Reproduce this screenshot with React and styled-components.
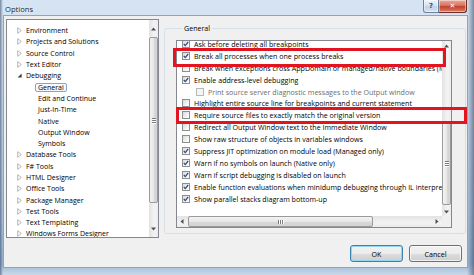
import React from 'react';
import styled, { createGlobalStyle } from 'styled-components';

const FONT = `"Open Sans", "Segoe UI", "Noto Sans", sans-serif`;

const Global = createGlobalStyle`
  html, body { margin: 0; padding: 0; background: #ffffff; }
  body { width: 474px; height: 275px; overflow: hidden; }
  * { box-sizing: border-box; }
`;

const Window = styled.div`
  position: relative;
  width: 474px;
  height: 275px;
  display: flex;
  flex-direction: column;
  padding: 0 6px 7px 3px;
  font-family: ${FONT};
  background:
    linear-gradient(90deg, rgba(40,60,90,0.55) 0px, rgba(40,60,90,0) 3px, rgba(40,60,90,0) 467px, rgba(30,45,70,0.5) 474px),
    linear-gradient(180deg, #d6e4f3 0%, #c7d9ed 40%, #b2c9e2 75%, #9db8d6 96%, #c9d9ea 100%);
`;

const TitleBar = styled.div`
  height: 15px;
  flex: none;
  display: flex;
  align-items: flex-start;
  justify-content: space-between;
`;

const Title = styled.div`
  padding: 4px 0 0 2px;
  font-size: 7.6px;
  line-height: 10px;
  color: #151f2c;
  text-shadow: 0 0 3px rgba(255, 255, 255, 0.9);
`;

const CaptionButtons = styled.div`
  display: flex;
  margin-right: 1px;
`;

const CaptionButton = styled.div`
  width: ${p => (p.$close ? 28 : 16)}px;
  height: 13px;
  display: flex;
  align-items: center;
  justify-content: center;
  border: 1px solid ${p => (p.$close ? '#6e2a22' : '#6f8299')};
  border-top: none;
  border-left: ${p => (p.$close ? 'none' : undefined)};
  border-radius: ${p => (p.$close ? '0 0 3px 0' : '0 0 0 3px')};
  background: ${p =>
    p.$close
      ? 'linear-gradient(180deg, #e9a99a 0%, #d7745f 45%, #c4412b 55%, #d4816a 100%)'
      : 'linear-gradient(180deg, #eef4fa 0%, #d6e3f1 45%, #bfd1e6 55%, #d5e3f2 100%)'};
  box-shadow: inset 0 0 0 1px rgba(255, 255, 255, 0.45);
  font-family: "DejaVu Sans", sans-serif;
  font-size: 7px;
  font-weight: bold;
  color: ${p => (p.$close ? '#ffffff' : '#3d4f66')};
`;

const Client = styled.div`
  flex: 1;
  display: flex;
  flex-direction: column;
  background: #f0f0f0;
  border: 1px solid #8ea3bc;
  padding: 3px 0 5px 2px;
`;

const MainRow = styled.div`
  height: 219px;
  flex: none;
  display: flex;
  align-items: flex-start;
  gap: 5px;
`;

const TreeBox = styled.div`
  width: 153px;
  height: 219px;
  flex: none;
  display: flex;
  background: #ffffff;
  border: 1px solid #828790;
`;

const TreeList = styled.div`
  flex: 1;
  overflow: hidden;
  padding-top: 5px;
`;

const TreeRow = styled.div`
  height: 11.3px;
  display: flex;
  align-items: center;
  padding-left: ${p => (p.$level ? 28 : 10)}px;
  white-space: nowrap;
`;

const Expander = styled.svg`
  width: 5px;
  height: 7px;
  margin-right: 4px;
  flex: none;
`;

const TreeLabel = styled.span`
  font-size: 7px;
  line-height: 7px;
  color: #000000;
  padding: 0 2px;
  border: 1px solid ${p => (p.$selected ? '#7fa7d8' : 'transparent')};
  border-radius: 2px;
  background: ${p => (p.$selected ? 'linear-gradient(180deg, #fbfdff, #eef5fd)' : 'transparent')};
  margin-left: ${p => (p.$level ? 0 : -3)}px;
`;

const VScroll = styled.div`
  width: 9px;
  flex: none;
  display: flex;
  flex-direction: column;
  background: linear-gradient(90deg, #e3e3e3, #f3f3f3 60%, #ececec);
`;

const HScroll = styled.div`
  height: 11px;
  display: flex;
  align-items: stretch;
  background: linear-gradient(180deg, #e3e3e3, #f3f3f3 60%, #ececec);
`;

const ArrowBtn = styled.div`
  flex: none;
  ${p => (p.$horizontal ? `width: ${p.$size}px;` : `height: ${p.$size}px;`)}
  display: flex;
  align-items: center;
  justify-content: center;
`;

const Thumb = styled.div`
  flex: none;
  ${p =>
    p.$horizontal
      ? `margin-left: ${p.$offset}px; width: ${p.$length}px; flex-direction: row;
         background: linear-gradient(180deg, #f4f4f4, #e7e7e7 50%, #d9d9d9 51%, #d3d3d3);`
      : `margin-top: ${p.$offset}px; height: ${p.$length}px; flex-direction: column;
         background: linear-gradient(90deg, #f4f4f4, #e7e7e7 50%, #d9d9d9 51%, #d3d3d3);`}
  border: 1px solid #9a9a9a;
  border-radius: 2px;
  display: flex;
  align-items: center;
  justify-content: center;
  gap: 1px;
`;

const Grip = styled.div`
  ${p => (p.$horizontal ? 'width: 1px; height: 4px;' : 'width: 4px; height: 1px;')}
  background: #7c7c7c;
  box-shadow: ${p => (p.$horizontal ? '1px 0 0 #ffffff' : '0 1px 0 #ffffff')};
`;

const Spacer = styled.div`
  flex: 1;
`;

const Group = styled.fieldset`
  flex: 1;
  min-width: 0;
  margin: 4px 1px 0 0;
  padding: 0 13px 5px 11px;
  border: 1px solid #d5dfe5;
  border-radius: 3px;
`;

const Legend = styled.legend`
  margin-left: 6px;
  padding: 0 2px;
  font-size: 7.1px;
  line-height: 10px;
  color: #000000;
`;

const ListBox = styled.div`
  margin-top: 7px;
  width: 276px;
  height: 188px;
  border: 1px solid #828790;
  background: #ffffff;
  display: grid;
  grid-template-columns: 1fr 9px;
  grid-template-rows: 1fr 11px;
`;

const ListContent = styled.div`
  overflow: hidden;
`;

const ListInner = styled.div`
  margin-top: -3px;
`;

const OptionRow = styled.div`
  height: 11.9px;
  display: flex;
  align-items: center;
  padding-left: ${p => (p.$indent ? 19 : 5)}px;
  white-space: nowrap;
`;

const CheckBox = styled.span`
  width: 8px;
  height: 8px;
  flex: none;
  margin-right: 4px;
  border: 1px solid ${p => (p.$disabled ? '#b8b8b8' : '#8e8f8f')};
  background: ${p =>
    p.$disabled ? '#f4f4f4' : 'linear-gradient(135deg, #d9d9d9 0%, #f3f3f3 60%, #ffffff 100%)'};
  display: flex;
  align-items: center;
  justify-content: center;
`;

const OptionText = styled.span`
  font-size: 7.1px;
  line-height: 10px;
  color: ${p => (p.$disabled ? '#6d6d6d' : '#000000')};
`;

const Corner = styled.div`
  background: #f0f0f0;
`;

const ButtonRow = styled.div`
  margin-top: 7px;
  display: flex;
  justify-content: flex-end;
  gap: 6px;
  padding-right: 5px;
`;

const Button = styled.div`
  width: 53px;
  height: 17px;
  display: flex;
  align-items: center;
  justify-content: center;
  font-size: 7.1px;
  color: #000000;
  border: 1px solid ${p => (p.$primary ? '#3c7fb1' : '#707070')};
  border-radius: 3px;
  background: linear-gradient(180deg, #f2f2f2 0%, #ebebeb 50%, #dddddd 51%, #cfcfcf 100%);
  box-shadow: inset 0 0 0 1px ${p => (p.$primary ? '#93d6f4' : 'rgba(255,255,255,0.7)')};
`;

const Highlight = styled.div`
  position: absolute;
  left: ${p => p.$x}px;
  top: ${p => p.$y}px;
  width: ${p => p.$w}px;
  height: ${p => p.$h}px;
  border: 3px solid #e2141f;
  pointer-events: none;
`;

const Arrow = ({ dir }) => {
  const paths = {
    up: 'M0 3.5 L2.5 0.5 L5 3.5 Z',
    down: 'M0 0.5 L2.5 3.5 L5 0.5 Z',
    left: 'M3.5 0 L0.5 2.5 L3.5 5 Z',
    right: 'M0.5 0 L3.5 2.5 L0.5 5 Z',
  };
  const horiz = dir === 'left' || dir === 'right';
  return (
    <svg width={horiz ? 4 : 5} height={horiz ? 5 : 4} viewBox={horiz ? '0 0 4 5' : '0 0 5 4'}>
      <path d={paths[dir]} fill="#505050" />
    </svg>
  );
};

const Check = () => (
  <svg width="6" height="6" viewBox="0 0 6 6">
    <path d="M0.8 3 L2.3 4.6 L5.2 1" fill="none" stroke="#2c4a85" strokeWidth="1.2" />
  </svg>
);

const treeItems = [
  { label: 'Environment' },
  { label: 'Projects and Solutions' },
  { label: 'Source Control' },
  { label: 'Text Editor' },
  { label: 'Debugging', expanded: true },
  { label: 'General', level: 1, selected: true },
  { label: 'Edit and Continue', level: 1 },
  { label: 'Just-In-Time', level: 1 },
  { label: 'Native', level: 1 },
  { label: 'Output Window', level: 1 },
  { label: 'Symbols', level: 1 },
  { label: 'Database Tools' },
  { label: 'F# Tools' },
  { label: 'HTML Designer' },
  { label: 'Office Tools' },
  { label: 'Package Manager' },
  { label: 'Test Tools' },
  { label: 'Text Templating' },
  { label: 'Windows Forms Designer' },
];

const options = [
  { label: 'Ask before deleting all breakpoints', checked: true },
  { label: 'Break all processes when one process breaks', checked: true },
  { label: 'Break when exceptions cross AppDomain or managed/native boundaries (Managed only)' },
  { label: 'Enable address-level debugging', checked: true },
  { label: 'Print source server diagnostic messages to the Output window', indent: true, disabled: true },
  { label: 'Highlight entire source line for breakpoints and current statement' },
  { label: 'Require source files to exactly match the original version' },
  { label: 'Redirect all Output Window text to the Immediate Window' },
  { label: 'Show raw structure of objects in variables windows' },
  { label: 'Suppress JIT optimization on module load (Managed only)', checked: true },
  { label: 'Warn if no symbols on launch (Native only)', checked: true },
  { label: 'Warn if script debugging is disabled on launch', checked: true },
  { label: 'Enable function evaluations when minidump debugging through IL interpreter', checked: true },
  { label: 'Show parallel stacks diagram bottom-up', checked: true },
];

const Expand = ({ expanded }) =>
  expanded ? (
    <Expander viewBox="0 0 5 7">
      <path d="M4.6 1.6 L4.6 5.6 L0.6 5.6 Z" fill="#3c3c3c" />
    </Expander>
  ) : (
    <Expander viewBox="0 0 5 7">
      <path d="M0.7 0.7 L4.3 3.5 L0.7 6.3 Z" fill="#ffffff" stroke="#a3a3a3" strokeWidth="0.8" />
    </Expander>
  );

export default function App() {
  return (
    <>
      <Global />
      <Window>
        <TitleBar>
          <Title>Options</Title>
          <CaptionButtons>
            <CaptionButton>?</CaptionButton>
            <CaptionButton $close>✕</CaptionButton>
          </CaptionButtons>
        </TitleBar>
        <Client>
          <MainRow>
            <TreeBox>
              <TreeList>
                {treeItems.map(item => (
                  <TreeRow key={item.label} $level={item.level}>
                    {!item.level && <Expand expanded={item.expanded} />}
                    <TreeLabel $level={item.level ? 1 : 0} $selected={item.selected}>
                      {item.label}
                    </TreeLabel>
                  </TreeRow>
                ))}
              </TreeList>
              <VScroll>
                <ArrowBtn $size={17}><Arrow dir="up" /></ArrowBtn>
                <Thumb $offset={0} $length={166}>
                  <Grip /><Grip /><Grip />
                </Thumb>
                <Spacer />
                <ArrowBtn $size={16}><Arrow dir="down" /></ArrowBtn>
              </VScroll>
            </TreeBox>
            <Group>
              <Legend>General</Legend>
              <ListBox>
                <ListContent>
                  <ListInner>
                    {options.map(o => (
                      <OptionRow key={o.label} $indent={o.indent}>
                        <CheckBox $disabled={o.disabled}>{o.checked && <Check />}</CheckBox>
                        <OptionText $disabled={o.disabled}>{o.label}</OptionText>
                      </OptionRow>
                    ))}
                  </ListInner>
                </ListContent>
                <VScroll>
                  <ArrowBtn $size={9}><Arrow dir="up" /></ArrowBtn>
                  <Thumb $offset={72} $length={83}>
                    <Grip /><Grip /><Grip />
                  </Thumb>
                  <Spacer />
                  <ArrowBtn $size={9}><Arrow dir="down" /></ArrowBtn>
                </VScroll>
                <HScroll>
                  <ArrowBtn $horizontal $size={10}><Arrow dir="left" /></ArrowBtn>
                  <Thumb $horizontal $offset={1} $length={185}>
                    <Grip $horizontal /><Grip $horizontal /><Grip $horizontal />
                  </Thumb>
                  <Spacer />
                  <ArrowBtn $horizontal $size={10}><Arrow dir="right" /></ArrowBtn>
                </HScroll>
                <Corner />
              </ListBox>
            </Group>
          </MainRow>
          <ButtonRow>
            <Button $primary>OK</Button>
            <Button>Cancel</Button>
          </ButtonRow>
        </Client>
        <Highlight $x={173} $y={48} $w={273} $h={19} />
        <Highlight $x={176} $y={107} $w={291} $h={17} />
      </Window>
    </>
  );
}
